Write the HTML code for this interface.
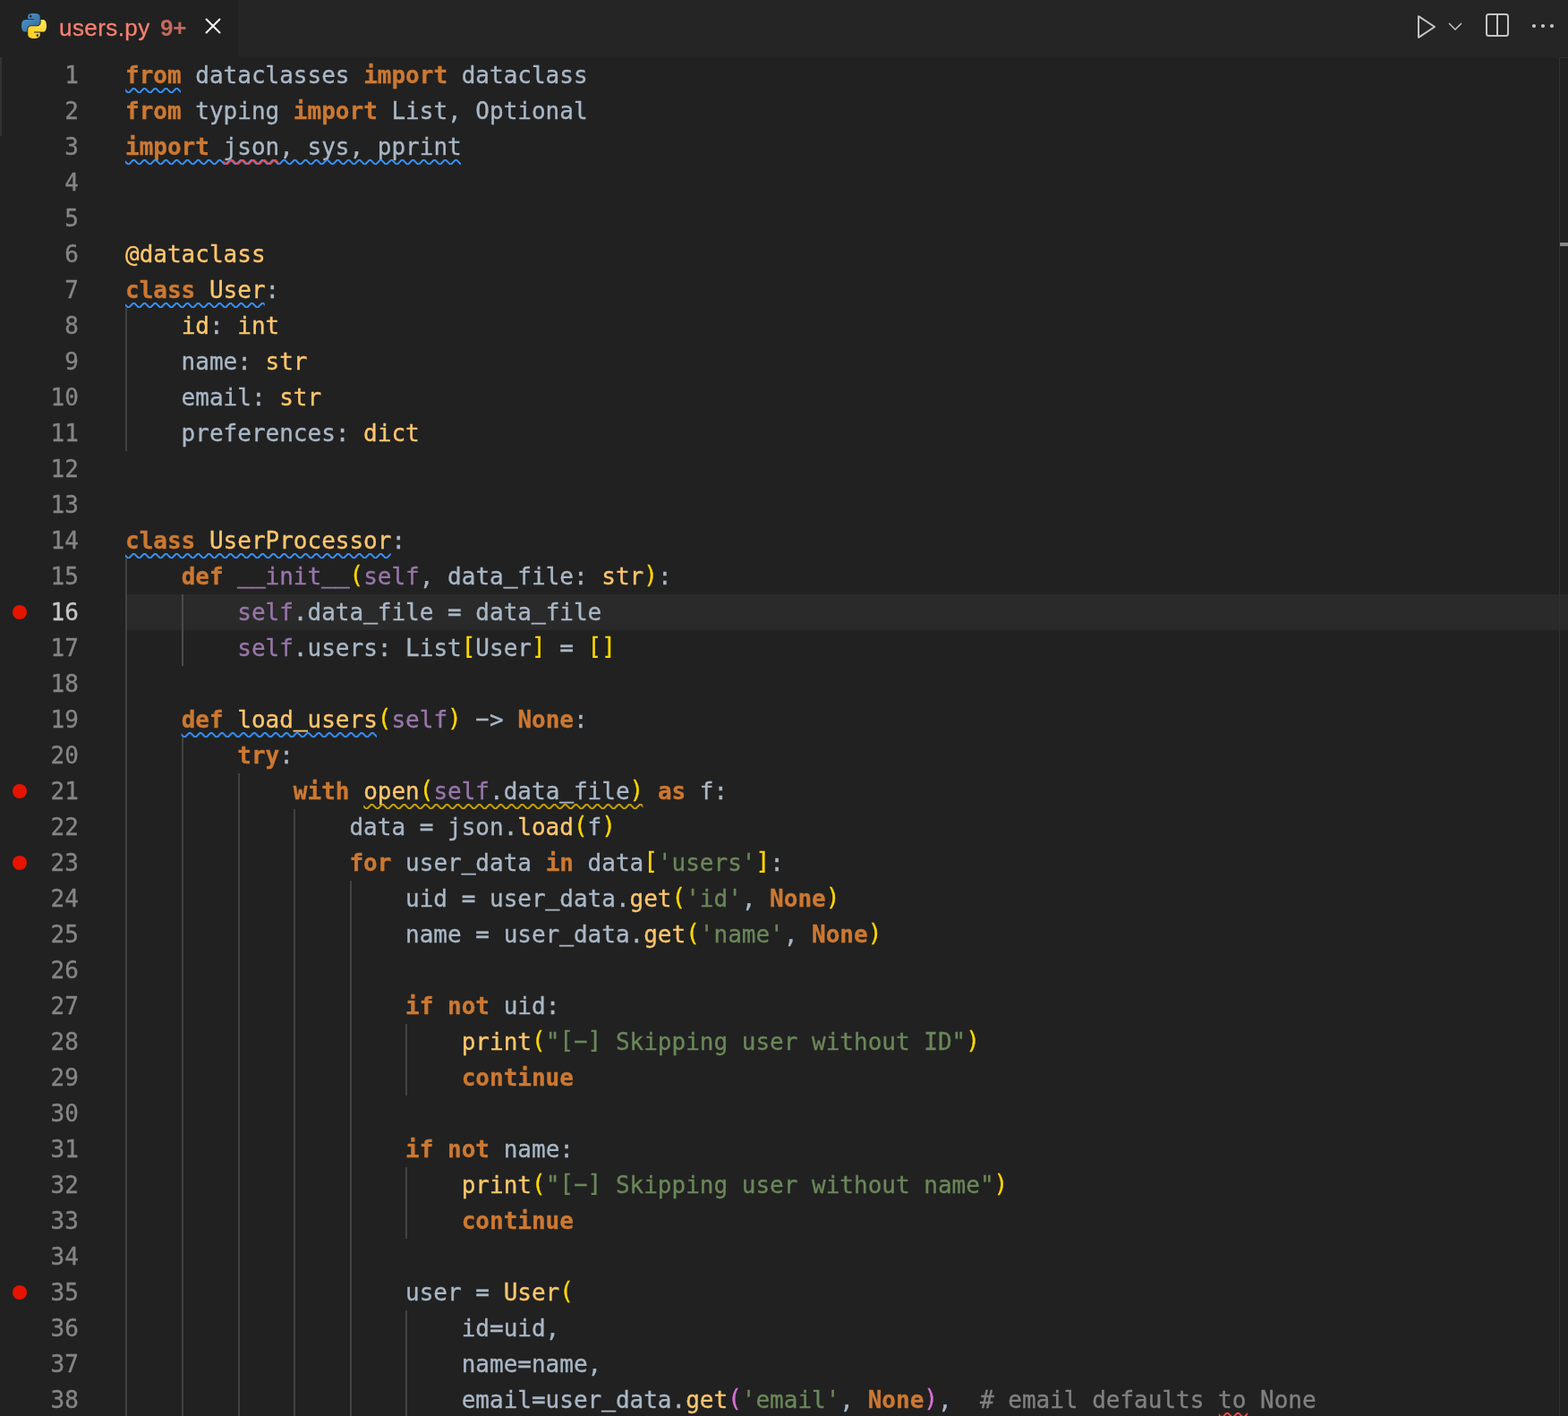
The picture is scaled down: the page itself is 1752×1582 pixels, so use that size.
<!DOCTYPE html>
<html lang="en"><head><meta charset="utf-8"><title>users.py</title>
<style>

html,body{margin:0;padding:0;}
#root{position:absolute;left:0;top:0;width:1752px;height:1582px;overflow:hidden;will-change:transform;}
body{width:1752px;height:1582px;overflow:hidden;background:#212121;position:relative;font-family:"Liberation Sans",sans-serif;}
#tabs{position:absolute;left:0;top:0;width:1752px;height:64px;background:#252525;}
#tab{position:absolute;left:0;top:0;width:266px;height:64px;background:#212121;}
#tabname{position:absolute;left:66px;top:0;height:64px;line-height:63px;font-size:26px;color:#f88070;white-space:pre;letter-spacing:0.42px;-webkit-text-stroke:0.3px #f88070;}
#tabcount{position:absolute;left:179px;top:0;height:64px;line-height:63px;font-size:26px;font-weight:bold;color:#c4695d;white-space:pre;letter-spacing:-0.3px;}

.ln{position:absolute;left:0;width:87.9px;height:40px;line-height:40px;text-align:right;color:#858585;font:26px/40px "DejaVu Sans Mono", "Liberation Mono", monospace;}
.ln.cur{color:#c6c6c6;}
.cl,.ln{-webkit-text-stroke:0.35px currentColor;}
.cl{position:absolute;left:140px;height:40px;white-space:pre;font:26px/40px "DejaVu Sans Mono", "Liberation Mono", monospace;color:#a9b7c6;}
.k{color:#cc7832;font-weight:bold;}
.s{color:#6a8759;}
.f{color:#ffc66d;}
.p{color:#9876aa;}
.c{color:#808080;}
.b1,.b2,.b3,.br{position:relative;top:-2px;}
.u{position:relative;top:-2.1px;-webkit-text-stroke:0.8px currentColor;}
.h{display:inline-block;transform:translateY(-1.7px) scaleX(1.93);}
.b1{color:#ffd700;}
.b2{color:#da70d6;}
.b3{color:#179fff;}
.g{position:absolute;width:2px;background:#424242;}
.g.a{background:#4b4b4b;}
.bp{position:absolute;left:14px;width:16px;height:16px;border-radius:50%;background:#e51400;}
#curline{position:absolute;left:142px;width:1610px;height:40px;background:#2a2a2a;}
#ruler{position:absolute;left:1742px;top:64px;width:1px;height:1518px;background:#303030;}
#rulertop{position:absolute;left:1742px;top:64px;width:10px;height:1px;background:#303030;}
#rmark{position:absolute;left:1743px;top:271px;width:9px;height:4px;background:#878787;}
#lstrip{position:absolute;left:0;top:64px;width:2px;height:88px;background:#313335;}
svg{position:absolute;overflow:visible;}

</style></head><body><div id="root">
<div id="tabs"><div id="tab"></div>
<svg id="pyicon" style="left:24px;top:15px" width="28" height="27.3" viewBox="0 0 111 110" preserveAspectRatio="none">
<defs><linearGradient id="pb" x1="0" y1="0" x2="1" y2="1"><stop offset="0" stop-color="#5398d0"/><stop offset="1" stop-color="#2f6796"/></linearGradient>
<linearGradient id="pyl" x1="1" y1="0" x2="0" y2="1"><stop offset="0" stop-color="#ffe35a"/><stop offset="1" stop-color="#fdcf18"/></linearGradient></defs>
<path fill="url(#pb)" d="M54.919 0c-4.584.022-8.961.413-12.813 1.095C30.760 3.099 28.700 7.295 28.700 15.032v10.219h26.813v3.406H18.638c-7.793 0-14.616 4.684-16.750 13.594-2.462 10.213-2.571 16.586 0 27.250 1.906 7.938 6.458 13.594 14.250 13.594h9.219v-12.250c0-8.850 7.657-16.656 16.750-16.656h26.781c7.455 0 13.406-6.138 13.406-13.625V15.032c0-7.266-6.130-12.725-13.406-13.937C64.282.328 59.502-.02 54.919 0zm-14.500 8.219c2.770 0 5.031 2.299 5.031 5.125 0 2.816-2.262 5.094-5.031 5.094-2.779 0-5.031-2.277-5.031-5.094 0-2.826 2.252-5.125 5.031-5.125z"/>
<path fill="url(#pyl)" d="M85.638 28.657v11.906c0 9.231-7.826 17-16.750 17H42.106c-7.336 0-13.406 6.279-13.406 13.625v25.531c0 7.266 6.319 11.540 13.406 13.625 8.487 2.496 16.626 2.947 26.781 0 6.750-1.954 13.406-5.888 13.406-13.625V86.501H55.513v-3.406h40.188c7.793 0 10.696-5.436 13.406-13.594 2.799-8.399 2.680-16.476 0-27.250-1.926-7.757-5.604-13.594-13.406-13.594zM70.575 93.313c2.779 0 5.031 2.277 5.031 5.094 0 2.826-2.252 5.125-5.031 5.125-2.770 0-5.031-2.299-5.031-5.125 0-2.816 2.262-5.094 5.031-5.094z"/>
</svg>
<div id="tabname">users.py</div><div id="tabcount">9+</div>
<svg style="left:229px;top:20px" width="18" height="18" viewBox="0 0 18 18"><path d="M1 1 L17 17 M17 1 L1 17" stroke="#ffffff" stroke-width="2" fill="none"/></svg>
<svg style="left:1576px;top:8px" width="176" height="48" viewBox="1576 8 176 48" fill="none" stroke="#c5c5c5" stroke-width="2"><path d="M1585 18.2 L1603 30 L1585 41.8 Z" stroke-linejoin="round"/><path d="M1619 26 L1626 33 L1633 26" stroke-width="1.5"/><rect x="1661" y="16" width="24" height="24" rx="2.5"/><path d="M1673 16 V40"/><g fill="#c5c5c5" stroke="none"><circle cx="1714" cy="29" r="2.1"/><circle cx="1724" cy="29" r="2.1"/><circle cx="1734" cy="29" r="2.1"/></g></svg>
</div>
<div id="lstrip"></div>
<div id="curline" style="top:664px"></div>
<div class="g" style="left:140.3px;top:344px;height:160px"></div>
<div class="g" style="left:140.3px;top:624px;height:1000px"></div>
<div class="g a" style="left:202.9px;top:664px;height:80px"></div>
<div class="g" style="left:202.9px;top:824px;height:800px"></div>
<div class="g" style="left:265.5px;top:864px;height:760px"></div>
<div class="g" style="left:328.1px;top:904px;height:720px"></div>
<div class="g" style="left:390.7px;top:984px;height:640px"></div>
<div class="g" style="left:453.3px;top:1144px;height:80px"></div>
<div class="g" style="left:453.3px;top:1304px;height:80px"></div>
<div class="g" style="left:453.3px;top:1464px;height:160px"></div>
<div id="ruler"></div><div id="rulertop"></div><div id="rmark"></div>
<div class="bp" style="top:676px"></div>
<div class="bp" style="top:876px"></div>
<div class="bp" style="top:956px"></div>
<div class="bp" style="top:1436px"></div>
<div class="ln" style="top:64px">1</div>
<div class="ln" style="top:104px">2</div>
<div class="ln" style="top:144px">3</div>
<div class="ln" style="top:184px">4</div>
<div class="ln" style="top:224px">5</div>
<div class="ln" style="top:264px">6</div>
<div class="ln" style="top:304px">7</div>
<div class="ln" style="top:344px">8</div>
<div class="ln" style="top:384px">9</div>
<div class="ln" style="top:424px">10</div>
<div class="ln" style="top:464px">11</div>
<div class="ln" style="top:504px">12</div>
<div class="ln" style="top:544px">13</div>
<div class="ln" style="top:584px">14</div>
<div class="ln" style="top:624px">15</div>
<div class="ln cur" style="top:664px">16</div>
<div class="ln" style="top:704px">17</div>
<div class="ln" style="top:744px">18</div>
<div class="ln" style="top:784px">19</div>
<div class="ln" style="top:824px">20</div>
<div class="ln" style="top:864px">21</div>
<div class="ln" style="top:904px">22</div>
<div class="ln" style="top:944px">23</div>
<div class="ln" style="top:984px">24</div>
<div class="ln" style="top:1024px">25</div>
<div class="ln" style="top:1064px">26</div>
<div class="ln" style="top:1104px">27</div>
<div class="ln" style="top:1144px">28</div>
<div class="ln" style="top:1184px">29</div>
<div class="ln" style="top:1224px">30</div>
<div class="ln" style="top:1264px">31</div>
<div class="ln" style="top:1304px">32</div>
<div class="ln" style="top:1344px">33</div>
<div class="ln" style="top:1384px">34</div>
<div class="ln" style="top:1424px">35</div>
<div class="ln" style="top:1464px">36</div>
<div class="ln" style="top:1504px">37</div>
<div class="ln" style="top:1544px">38</div>
<div class="cl" style="top:64px"><span class="k">from</span> dataclasses <span class="k">import</span> dataclass</div>
<div class="cl" style="top:104px"><span class="k">from</span> typing <span class="k">import</span> List, Optional</div>
<div class="cl" style="top:144px"><span class="k">import</span> json, sys, pprint</div>
<div class="cl" style="top:264px"><span class="f">@dataclass</span></div>
<div class="cl" style="top:304px"><span class="k">class</span> <span class="f">User</span>:</div>
<div class="cl" style="top:344px">    <span class="f">id</span>: <span class="f">int</span></div>
<div class="cl" style="top:384px">    name: <span class="f">str</span></div>
<div class="cl" style="top:424px">    email: <span class="f">str</span></div>
<div class="cl" style="top:464px">    preferences: <span class="f">dict</span></div>
<div class="cl" style="top:584px"><span class="k">class</span> <span class="f">UserProcessor</span>:</div>
<div class="cl" style="top:624px">    <span class="k">def</span> <span class="p"><span class="u">_</span><span class="u">_</span>init<span class="u">_</span><span class="u">_</span></span><span class="b1">(</span><span class="p">self</span>, data<span class="u">_</span>file: <span class="f">str</span><span class="b1">)</span>:</div>
<div class="cl" style="top:664px">        <span class="p">self</span>.data<span class="u">_</span>file = data<span class="u">_</span>file</div>
<div class="cl" style="top:704px">        <span class="p">self</span>.users: List<span class="b1">[</span>User<span class="b1">]</span> = <span class="b1">[]</span></div>
<div class="cl" style="top:784px">    <span class="k">def</span> <span class="f">load<span class="u">_</span>users</span><span class="b1">(</span><span class="p">self</span><span class="b1">)</span> <span class="h">-</span>&gt; <span class="k">None</span>:</div>
<div class="cl" style="top:824px">        <span class="k">try</span>:</div>
<div class="cl" style="top:864px">            <span class="k">with</span> <span class="f">open</span><span class="b1">(</span><span class="p">self</span>.data<span class="u">_</span>file<span class="b1">)</span> <span class="k">as</span> f:</div>
<div class="cl" style="top:904px">                data = json.<span class="f">load</span><span class="b1">(</span>f<span class="b1">)</span></div>
<div class="cl" style="top:944px">                <span class="k">for</span> user<span class="u">_</span>data <span class="k">in</span> data<span class="b1">[</span><span class="s">'users'</span><span class="b1">]</span>:</div>
<div class="cl" style="top:984px">                    uid = user<span class="u">_</span>data.<span class="f">get</span><span class="b1">(</span><span class="s">'id'</span>, <span class="k">None</span><span class="b1">)</span></div>
<div class="cl" style="top:1024px">                    name = user<span class="u">_</span>data.<span class="f">get</span><span class="b1">(</span><span class="s">'name'</span>, <span class="k">None</span><span class="b1">)</span></div>
<div class="cl" style="top:1104px">                    <span class="k">if</span> <span class="k">not</span> uid:</div>
<div class="cl" style="top:1144px">                        <span class="f">print</span><span class="b1">(</span><span class="s">"<span class="br">[</span><span class="h">-</span><span class="br">]</span> Skipping user without ID"</span><span class="b1">)</span></div>
<div class="cl" style="top:1184px">                        <span class="k">continue</span></div>
<div class="cl" style="top:1264px">                    <span class="k">if</span> <span class="k">not</span> name:</div>
<div class="cl" style="top:1304px">                        <span class="f">print</span><span class="b1">(</span><span class="s">"<span class="br">[</span><span class="h">-</span><span class="br">]</span> Skipping user without name"</span><span class="b1">)</span></div>
<div class="cl" style="top:1344px">                        <span class="k">continue</span></div>
<div class="cl" style="top:1424px">                    user = <span class="f">User</span><span class="b1">(</span></div>
<div class="cl" style="top:1464px">                        id=uid,</div>
<div class="cl" style="top:1504px">                        name=name,</div>
<div class="cl" style="top:1544px">                        email=user<span class="u">_</span>data.<span class="f">get</span><span class="b2">(</span><span class="s">'email'</span>, <span class="k">None</span><span class="b2">)</span>,  <span class="c"># email defaults to None</span></div>
<svg style="left:0;top:0" width="1752" height="1582" viewBox="0 0 1752 1582"><defs>
<pattern id="sq0" width="12" height="6" patternUnits="userSpaceOnUse"><g fill="#3794ff" transform="scale(2)"><polygon points="5.5,0 2.5,3 1.1,3 4.1,0"/><polygon points="4,0 6,2 6,0.6 5.4,0"/><polygon points="0,2 1,3 2.4,3 0,0.6"/></g></pattern>
<pattern id="sq1" width="12" height="6" patternUnits="userSpaceOnUse"><g fill="#f14c4c" transform="scale(2)"><polygon points="5.5,0 2.5,3 1.1,3 4.1,0"/><polygon points="4,0 6,2 6,0.6 5.4,0"/><polygon points="0,2 1,3 2.4,3 0,0.6"/></g></pattern>
<pattern id="sq2" width="12" height="6" patternUnits="userSpaceOnUse"><g fill="#cca700" transform="scale(2)"><polygon points="5.5,0 2.5,3 1.1,3 4.1,0"/><polygon points="4,0 6,2 6,0.6 5.4,0"/><polygon points="0,2 1,3 2.4,3 0,0.6"/></g></pattern>
</defs>
<g transform="translate(140.00,98)"><rect x="0" y="0" width="61.91" height="6" fill="url(#sq0)"/></g>
<g transform="translate(140.00,178)"><rect x="0" y="0" width="374.95" height="6" fill="url(#sq0)"/></g>
<g transform="translate(249.56,178)"><rect x="0" y="0" width="61.91" height="6" fill="url(#sq1)"/></g>
<g transform="translate(140.00,338)"><rect x="0" y="0" width="155.82" height="6" fill="url(#sq0)"/></g>
<g transform="translate(140.00,618)"><rect x="0" y="0" width="296.69" height="6" fill="url(#sq0)"/></g>
<g transform="translate(202.61,818)"><rect x="0" y="0" width="218.43" height="6" fill="url(#sq0)"/></g>
<g transform="translate(406.08,898)"><rect x="0" y="0" width="312.34" height="6" fill="url(#sq2)"/></g>
<g transform="translate(1361.80,1578)"><rect x="0" y="0" width="32.33" height="6" fill="url(#sq1)"/></g>
</svg>
</div></body></html>
